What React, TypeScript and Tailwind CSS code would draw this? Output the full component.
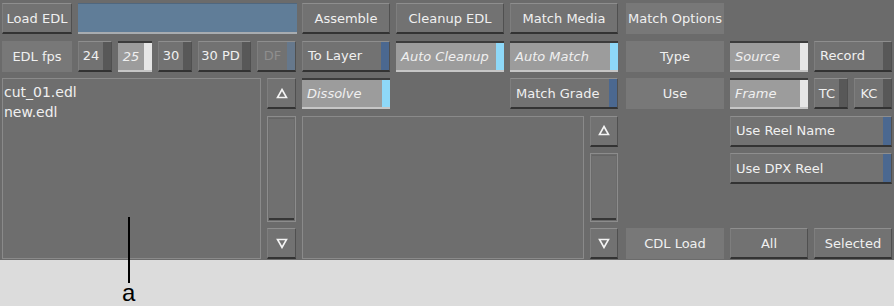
import React from "react";

const raised =
  "bg-[#727272] border-t border-t-[#8e8e8e] border-l border-l-[#7e7e7e] border-r border-r-[#505050] border-b-2 border-b-[#333333]";
const onCls =
  "bg-[#9c9c9c] border-t-2 border-t-[#3c3c3c] border-b-2 border-b-[#c6c6c6]";
const labelCls = "bg-[#787878]";

type BtnProps = {
  label: string;
  pos: string;
  variant: "raised" | "on" | "label" | "disabled";
  strip?: string;
  italic?: boolean;
  align?: "left" | "center";
};

function Btn({ label, pos, variant, strip, italic, align = "center" }: BtnProps) {
  const base =
    variant === "on" ? onCls : variant === "label" ? labelCls : raised;
  return (
    <div className={`${pos} ${base} flex items-stretch overflow-hidden`}>
      <div
        className={`flex-1 flex items-center pt-[1px] ${
          align === "left" ? "justify-start pl-[5px]" : "justify-center"
        } ${italic ? "italic" : ""} ${
          variant === "disabled" ? "text-[#8e8e8e]" : "text-[#f0f0f0]"
        } whitespace-nowrap`}
      >
        {label}
      </div>
      {strip && <div className={`w-[8px] shrink-0 ${strip}`} />}
    </div>
  );
}

function Arrow({ up }: { up: boolean }) {
  return (
    <svg width="12" height="11" viewBox="0 0 12 11">
      {up ? (
        <polygon points="6,1.5 10.5,9.5 1.5,9.5" fill="none" stroke="#f4f4f4" strokeWidth="1.6" />
      ) : (
        <polygon points="1.5,1.5 10.5,1.5 6,9.5" fill="none" stroke="#f4f4f4" strokeWidth="1.6" />
      )}
    </svg>
  );
}

function ScrollBtn({ pos, up }: { pos: string; up: boolean }) {
  return (
    <div className={`${pos} ${raised} flex items-center justify-center`}>
      <Arrow up={up} />
    </div>
  );
}

function Track({ pos }: { pos: string }) {
  return (
    <div className={`${pos} border border-[#8c8c8c] p-[1px]`}>
      <div className="h-full bg-[#707070] border-t border-t-[#656565] border-b-2 border-b-[#363636]" />
    </div>
  );
}

const GRAY = "bg-[#585858]";
const WHITE = "bg-[#e6e6e6]";
const CYAN = "bg-[#8ed8f8]";
const BLUE = "bg-[#4b6890]";
const DIMBLUE = "bg-[#66788c]";

export default function App() {
  return (
    <div className="relative w-[894px] h-[306px] bg-[#dcdcdc] font-['DejaVu_Sans',sans-serif] text-[13px]">
      <div className="h-[260px] bg-[#6b6b6b] pt-[3px] pl-[2px]">
        <div className="grid grid-cols-[70px_34px_34px_34px_53px_4px_29px_88px_108px_74px_30px_98px_78px_34px_38px] grid-rows-[repeat(7,31px)] gap-x-[6px] gap-y-[6.5px]">
          {/* Row 1 */}
          <Btn label="Load EDL" pos="col-start-1 row-start-1" variant="raised" />
          <div className="col-start-2 col-span-6 row-start-1 bg-[#607d98] border-t border-t-[#50677e] border-b-2 border-b-[#a8acb0] mr-[-1px]" />
          <Btn label="Assemble" pos="col-start-8 row-start-1" variant="raised" />
          <Btn label="Cleanup EDL" pos="col-start-9 row-start-1" variant="raised" />
          <Btn label="Match Media" pos="col-start-10 col-span-2 row-start-1 mr-[2px]" variant="raised" />
          <Btn label="Match Options" pos="col-start-12 row-start-1" variant="label" />

          {/* Row 2 */}
          <Btn label="EDL fps" pos="col-start-1 row-start-2" variant="label" />
          <Btn label="24" pos="col-start-2 row-start-2" variant="raised" strip={GRAY} />
          <Btn label="25" pos="col-start-3 row-start-2" variant="on" strip={WHITE} italic />
          <Btn label="30" pos="col-start-4 row-start-2" variant="raised" strip={GRAY} />
          <Btn label="30 PD" pos="col-start-5 row-start-2" variant="raised" strip={GRAY} />
          <Btn label="DF" pos="col-start-6 col-span-2 row-start-2" variant="disabled" strip={DIMBLUE} />
          <Btn label="To Layer" pos="col-start-8 row-start-2" variant="raised" strip={BLUE} align="left" />
          <Btn label="Auto Cleanup" pos="col-start-9 row-start-2" variant="on" strip={CYAN} italic align="left" />
          <Btn label="Auto Match" pos="col-start-10 col-span-2 row-start-2 mr-[2px]" variant="on" strip={CYAN} italic align="left" />
          <Btn label="Type" pos="col-start-12 row-start-2" variant="label" />
          <Btn label="Source" pos="col-start-13 row-start-2" variant="on" strip={WHITE} italic align="left" />
          <Btn label="Record" pos="col-start-14 col-span-2 row-start-2" variant="raised" strip={GRAY} align="left" />

          {/* Row 3+ */}
          <div className="col-start-1 col-span-6 row-start-3 row-span-5 bg-[#6e6e6e] border border-[#8a8a8a] px-[1px] pt-[3px] text-[14px] text-[#f0f0f0] leading-[20px]">
            <div>cut_01.edl</div>
            <div>new.edl</div>
          </div>
          <ScrollBtn pos="col-start-7 row-start-3" up />
          <Track pos="col-start-7 row-start-4 row-span-3" />
          <ScrollBtn pos="col-start-7 row-start-7" up={false} />

          <Btn label="Dissolve" pos="col-start-8 row-start-3" variant="on" strip={CYAN} italic align="left" />
          <Btn label="Match Grade" pos="col-start-10 col-span-2 row-start-3 mr-[2px]" variant="raised" strip={BLUE} align="left" />
          <Btn label="Use" pos="col-start-12 row-start-3" variant="label" />
          <Btn label="Frame" pos="col-start-13 row-start-3" variant="on" strip={WHITE} italic align="left" />
          <Btn label="TC" pos="col-start-14 row-start-3" variant="raised" strip={GRAY} />
          <Btn label="KC" pos="col-start-15 row-start-3" variant="raised" strip={GRAY} />

          {/* Row 4+ */}
          <div className="col-start-8 col-span-3 row-start-4 row-span-4 bg-[#6e6e6e] border border-[#8a8a8a]" />
          <ScrollBtn pos="col-start-11 row-start-4 w-[28px]" up />
          <Track pos="col-start-11 row-start-5 row-span-2 w-[28px]" />
          <ScrollBtn pos="col-start-11 row-start-7 w-[28px]" up={false} />
          <Btn label="Use Reel Name" pos="col-start-13 col-span-3 row-start-4" variant="raised" strip={BLUE} align="left" />
          <Btn label="Use DPX Reel" pos="col-start-13 col-span-3 row-start-5" variant="raised" strip={BLUE} align="left" />

          {/* Row 7 */}
          <Btn label="CDL Load" pos="col-start-12 row-start-7" variant="label" />
          <Btn label="All" pos="col-start-13 row-start-7" variant="raised" />
          <Btn label="Selected" pos="col-start-14 col-span-2 row-start-7" variant="raised" />
        </div>
      </div>

      {/* Callout */}
      <div className="absolute left-[128px] top-[217px] w-[2px] h-[66px] bg-black" />
      <div className="absolute left-[122px] top-[281px] text-[24px] leading-none text-black font-['Liberation_Sans',sans-serif]">
        a
      </div>
    </div>
  );
}
